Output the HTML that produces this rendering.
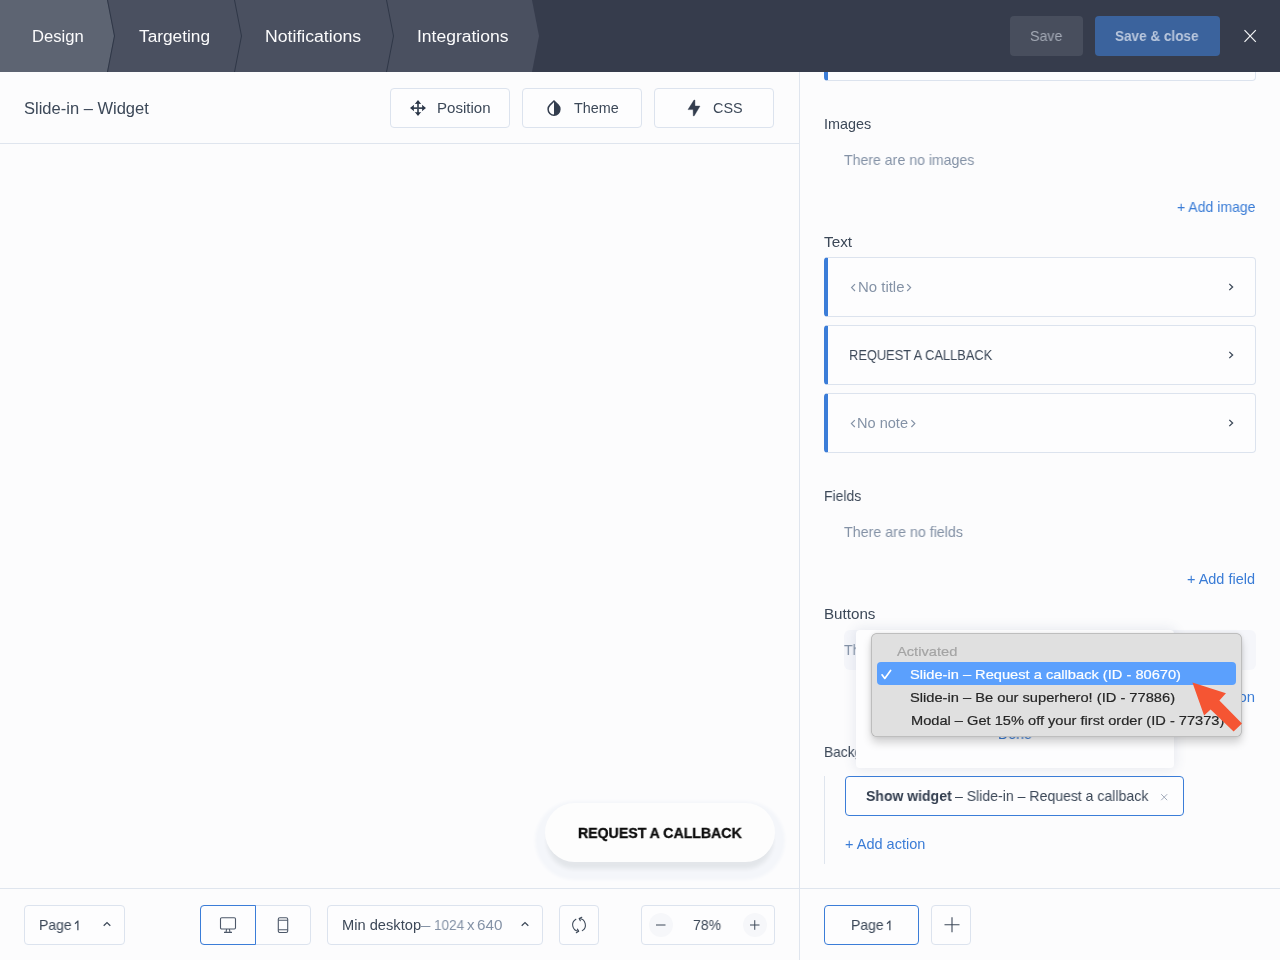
<!DOCTYPE html>
<html>
<head>
<meta charset="utf-8">
<style>
*{box-sizing:border-box;margin:0;padding:0}
html,body{width:1280px;height:960px;overflow:hidden}
body{font-family:"Liberation Sans",sans-serif;background:#fcfcfd;color:#3c4858;position:relative}
.abs{position:absolute}
.t{position:absolute;white-space:nowrap;line-height:1;transform-origin:0 0;will-change:transform}
#topbar{z-index:10;left:0;top:0;width:1280px;height:72px;background:#363c4c}
#topbar svg{position:absolute}
.btn{position:absolute;border:1px solid #dce3ee;border-radius:4px;background:#fdfdfe}
.card{position:absolute;left:824px;width:432px;height:60px;border:1px solid #dce3ee;border-left:4px solid #3b7dd8;border-radius:4px;background:#fdfdfe}
</style>
</head>
<body>
<!-- TOP BAR -->
<div id="topbar" class="abs">
<svg style="left:0;top:0" width="560" height="72" viewBox="0 0 560 72">
<polygon points="386,0 532,0 539,36 532,72 386,72" fill="#4a5060"/>
<polygon points="234,0 386,0 393,36 386,72 234,72" fill="#4a5060"/>
<polyline points="386.5,0 393.5,36 386.5,72" fill="none" stroke="#2f3747" stroke-width="1"/>
<polygon points="107,0 234,0 241,36 234,72 107,72" fill="#4a5060"/>
<polyline points="234.5,0 241.5,36 234.5,72" fill="none" stroke="#2f3747" stroke-width="1"/>
<polygon points="0,0 107,0 114,36 107,72 0,72" fill="#5d6472"/>
<polyline points="107.5,0 114.5,36 107.5,72" fill="none" stroke="#2f3747" stroke-width="1"/>
</svg>
<div class="abs" style="left:1010px;top:16px;width:73px;height:40px;border-radius:4px;background:#484e5d"></div>
<div class="abs" style="left:1095px;top:16px;width:125px;height:40px;border-radius:4px;background:#3b639d"></div>
<svg style="left:1243px;top:28.5px" width="14" height="14" viewBox="0 0 14 14"><path d="M1.5 1.2L12.8 12.8M12.8 1.2L1.5 12.8" stroke="#f4f5f7" stroke-width="1.2" fill="none"/></svg>
<div class="t" id="tb1" style="left:31.79px;top:29px;font-size:16px;color:#fbfbfc;transform:scaleX(1.0382)">Design</div>
<div class="t" id="tb2" style="left:139.16px;top:29px;font-size:16px;color:#fbfbfc;transform:scaleX(1.0787)">Targeting</div>
<div class="t" id="tb3" style="left:265.41px;top:29px;font-size:16px;color:#fbfbfc;transform:scaleX(1.1035)">Notifications</div>
<div class="t" id="tb4" style="left:416.53px;top:29px;font-size:16px;color:#fbfbfc;transform:scaleX(1.0943)">Integrations</div>
<div class="t" id="sv" style="left:1029.78px;top:29px;font-size:14.6px;color:#a3a9b5;transform:scaleX(0.9720)">Save</div>
<div class="t" id="svc" style="left:1115.40px;top:29px;font-size:14.6px;color:#b9c7dd;font-weight:bold;transform:scaleX(0.9271)">Save &amp; close</div>
</div>

<!-- SUB HEADER -->
<div class="abs" style="left:0;top:143px;width:800px;height:1px;background:#dfe5ee"></div>
<div class="abs" style="left:799px;top:72px;width:1px;height:888px;background:#dfe5ee"></div>
<div class="btn" style="left:390px;top:88px;width:120px;height:40px"></div>
<div class="btn" style="left:522px;top:88px;width:120px;height:40px"></div>
<div class="btn" style="left:654px;top:88px;width:120px;height:40px"></div>
<svg class="abs" id="ic1" style="left:410px;top:99.75px" width="16" height="16" viewBox="0 0 16 16"><path d="M8 2.5V13.5M2.5 8H13.5" stroke="#3c4858" stroke-width="1.75" fill="none"/><path d="M8 0L11.2 4.1Q8 3.2 4.8 4.1ZM8 16L11.2 11.9Q8 12.8 4.8 11.9ZM0 8L4.1 4.8Q3.2 8 4.1 11.2ZM16 8L11.9 4.8Q12.8 8 11.9 11.2Z" fill="#2a3547"/></svg>
<svg class="abs" id="ic2" style="left:546px;top:99px" width="16" height="18" viewBox="0 0 16 18"><path d="M8 1.96L12.17 6.13A5.9 5.9 0 0 1 8 16.2Z" fill="#333d4e"/><path d="M8 1.96L3.83 6.13A5.9 5.9 0 1 0 12.17 6.13Z" fill="none" stroke="#333d4e" stroke-width="1.5"/></svg>
<svg class="abs" id="ic3" style="left:686px;top:98px" width="16" height="20" viewBox="0 0 16 20"><path d="M8.9 2L9 8L14 8.1L8.25 17.75L7.25 17.9L7.1 11.6L2 11.6L8 2.1Z" fill="#333d4e" stroke="#333d4e" stroke-width="0.4" stroke-linejoin="round"/></svg>

<!-- RIGHT PANEL -->
<div class="card" style="top:21px"></div>
<div class="card" style="top:257px"></div>
<div class="card" style="top:325px"></div>
<div class="card" style="top:393px"></div>
<svg class="abs" style="left:1227px;top:282px" width="8" height="10" viewBox="0 0 8 10"><path d="M2.3 1.9L5.6 5L2.3 8.1" stroke="#3c4858" stroke-width="1.3" fill="none"/></svg>
<svg class="abs" style="left:1227px;top:350px" width="8" height="10" viewBox="0 0 8 10"><path d="M2.3 1.9L5.6 5L2.3 8.1" stroke="#3c4858" stroke-width="1.3" fill="none"/></svg>
<svg class="abs" style="left:1227px;top:418px" width="8" height="10" viewBox="0 0 8 10"><path d="M2.3 1.9L5.6 5L2.3 8.1" stroke="#3c4858" stroke-width="1.3" fill="none"/></svg>
<svg class="abs" style="left:850px;top:283px" width="64" height="10" viewBox="0 0 64 10"><path d="M5 1.2L1.6 4.6L5 8M57.2 1.2L60.6 4.6L57.2 8" stroke="#8492a6" stroke-width="1.2" fill="none"/></svg>
<svg class="abs" style="left:850px;top:419px" width="68" height="10" viewBox="0 0 68 10"><path d="M4.8 1.2L1.4 4.6L4.8 8M61.4 1.2L64.8 4.6L61.4 8" stroke="#8492a6" stroke-width="1.2" fill="none"/></svg>
<div class="abs" style="left:844px;top:630px;width:412px;height:40px;border-radius:6px;background:#f5f6fa"></div>
<div class="abs" style="left:824px;top:776px;width:1px;height:88px;background:#dfe5ee"></div>
<div class="abs" style="left:845px;top:776px;width:339px;height:40px;border:1px solid #3b7dd8;border-radius:4px;background:#fdfdfe"></div>
<svg class="abs" style="left:1160px;top:793px" width="8" height="8" viewBox="0 0 8 8"><path d="M1.2 1.2L7.2 7.2M7.2 1.2L1.2 7.2" stroke="#98a2b2" stroke-width="0.9" fill="none"/></svg>

<!-- BOTTOM BAR -->
<div class="abs" style="left:0;top:888px;width:1280px;height:1px;background:#dfe5ee"></div>

<!-- WIDGET PILL -->
<div class="abs" style="left:545px;top:803px;width:230px;height:59px;border-radius:30px;background:#fdfdfd;box-shadow:0 9px 4px -2px rgba(20,22,30,0.07),0 8px 3px 10px rgba(244,246,250,1)"></div>

<!-- BOTTOM CONTROLS -->
<div class="btn" style="left:24px;top:905px;width:101px;height:40px"></div>
<svg class="abs" style="left:102px;top:920.2px" width="10" height="8" viewBox="0 0 10 8"><path d="M1.7 5.7L5 2.5L8.3 5.7" stroke="#3c4858" stroke-width="1.25" fill="none"/></svg>

<div class="btn" style="left:200px;top:905px;width:111px;height:40px"></div>
<div class="abs" style="left:200px;top:905px;width:56px;height:40px;border:1px solid #3b7dd8;border-radius:4px 0 0 4px"></div>
<svg class="abs" style="left:219px;top:916px" width="18" height="18" viewBox="0 0 18 18" fill="none" stroke="#4d5869" stroke-width="1.1"><rect x="1.5" y="1.7" width="15" height="11.3" rx="1.2"/><path d="M7.6 13L7 16.3M10.4 13L11 16.3M5 16.4H13"/></svg>
<svg class="abs" style="left:276px;top:916px" width="14" height="18" viewBox="0 0 14 18" fill="none" stroke="#4d5869" stroke-width="1.1"><rect x="2.3" y="1.7" width="9.4" height="14.8" rx="1.5"/><path d="M2.3 4.2H11.7M2.3 13.8H11.7"/></svg>

<div class="btn" style="left:327px;top:905px;width:216px;height:40px"></div>
<svg class="abs" style="left:520px;top:920.2px" width="10" height="8" viewBox="0 0 10 8"><path d="M1.7 5.7L5 2.5L8.3 5.7" stroke="#3c4858" stroke-width="1.25" fill="none"/></svg>

<div class="btn" style="left:559px;top:905px;width:40px;height:40px"></div>
<svg class="abs" style="left:570px;top:916px" width="18" height="18" viewBox="0 0 18 18" fill="none" stroke="#3c4858" stroke-width="1.05" stroke-linecap="round"><path d="M5.9 3.2A6.5 6.5 0 0 0 8.5 15.3M12.3 14.6A6.5 6.5 0 0 0 9.4 2.6"/><path d="M7.4 13.1L8.7 15.3L6.3 16.7M11.8 1.3L9.2 2.6L10.3 4.8" stroke-width="1.1" stroke-linejoin="round"/></svg>

<div class="btn" style="left:641px;top:905px;width:134px;height:40px"></div>
<div class="abs" style="left:649px;top:913px;width:24px;height:24px;border-radius:12px;background:#f6f7fa"></div>
<div class="abs" style="left:743px;top:913px;width:24px;height:24px;border-radius:12px;background:#f6f7fa"></div>
<svg class="abs" style="left:655px;top:919px" width="12" height="12" viewBox="0 0 12 12"><path d="M1 6H10.5" stroke="#3c4858" stroke-width="1"/></svg>
<svg class="abs" style="left:749px;top:919px" width="12" height="12" viewBox="0 0 12 12"><path d="M1 6H10.5M5.75 1.2V10.8" stroke="#3c4858" stroke-width="1"/></svg>

<div class="btn" style="left:824px;top:905px;width:95px;height:40px;border-color:#3b7dd8"></div>
<div class="btn" style="left:931px;top:905px;width:40px;height:40px"></div>
<svg class="abs" style="left:942.5px;top:916px" width="18" height="18" viewBox="0 0 18 18"><path d="M1.5 8.8H16.5M9 1.3V16.3" stroke="#3c4858" stroke-width="1.1"/></svg>
<svg class="abs" style="left:73.5px;top:919.5px" width="6" height="11" viewBox="0 0 6 11"><path d="M0.6 3.2L3.6 0.5H4.5V10.3H3.25V2.4L1.3 4.2Z" fill="#3c4858"/></svg>
<svg class="abs" style="left:885.5px;top:919.5px" width="6" height="11" viewBox="0 0 6 11"><path d="M0.6 3.2L3.6 0.5H4.5V10.3H3.25V2.4L1.3 4.2Z" fill="#3c4858"/></svg>
<div class="t" id="ttl" style="left:24.14px;top:101px;font-size:16px;color:#3c4858;transform:scaleX(1.0320)">Slide-in – Widget</div>
<div class="t" id="bp" style="left:437.39px;top:101px;font-size:14.4px;color:#3c4858;transform:scaleX(1.0463)">Position</div>
<div class="t" id="bt" style="left:573.71px;top:101px;font-size:14.4px;color:#3c4858;transform:scaleX(0.9987)">Theme</div>
<div class="t" id="bc" style="left:712.87px;top:101px;font-size:14.4px;color:#3c4858;transform:scaleX(0.9961)">CSS</div>
<div class="t" id="r1" style="left:823.71px;top:117px;font-size:14.4px;color:#3c4858;transform:scaleX(0.9936)">Images</div>
<div class="t" id="r2" style="left:844.11px;top:153px;font-size:14.4px;color:#8492a6;transform:scaleX(0.9818)">There are no images</div>
<div class="t" id="r3" style="left:1176.55px;top:200px;font-size:14.4px;color:#3a7cd6;transform:scaleX(0.9748)">+ Add image</div>
<div class="t" id="r4" style="left:823.69px;top:235px;font-size:14.4px;color:#3c4858;transform:scaleX(1.0655)">Text</div>
<div class="t" id="c1" style="left:857.50px;top:280px;font-size:14.4px;color:#8492a6;transform:scaleX(1.0373)">No title</div>
<div class="t" id="c2" style="left:848.97px;top:348px;font-size:14.4px;color:#3c4858;transform:scaleX(0.8920)">REQUEST A CALLBACK</div>
<div class="t" id="c3" style="left:857.43px;top:416px;font-size:14.4px;color:#8492a6;transform:scaleX(1.0121)">No note</div>
<div class="t" id="r5" style="left:824.18px;top:489px;font-size:14.4px;color:#3c4858;transform:scaleX(0.9682)">Fields</div>
<div class="t" id="r6" style="left:844.11px;top:525px;font-size:14.4px;color:#8492a6;transform:scaleX(0.9920)">There are no fields</div>
<div class="t" id="r7" style="left:1187.43px;top:572px;font-size:14.4px;color:#3a7cd6;transform:scaleX(1.0056)">+ Add field</div>
<div class="t" id="r8" style="left:824.08px;top:607px;font-size:14.4px;color:#3c4858;transform:scaleX(1.0544)">Buttons</div>
<div class="t" id="r9" style="left:844.12px;top:643px;font-size:14.4px;color:#8492a6;transform:scaleX(0.9744)">There are no buttons</div>
<div class="t" id="r10" style="left:1171.31px;top:690px;font-size:14.4px;color:#3a7cd6;transform:scaleX(1.0338)">+ Add button</div>
<div class="t" id="r11" style="left:824.19px;top:745px;font-size:14.4px;color:#3c4858;transform:scaleX(0.9578)">Background actions</div>
<div class="t" id="r12a" style="left:865.62px;top:789px;font-size:14.4px;color:#333e4f;font-weight:bold;transform:scaleX(0.9738)">Show widget</div>
<div class="t" id="r12b" style="left:954.91px;top:789px;font-size:14.4px;color:#3c4858;transform:scaleX(0.9781)">– Slide-in – Request a callback</div>
<div class="t" id="r13" style="left:845.32px;top:837px;font-size:14.4px;color:#3a7cd6;transform:scaleX(1.0095)">+ Add action</div>
<div class="t" id="pill" style="left:577.76px;top:826px;font-size:14.6px;color:#0d0d0d;-webkit-text-stroke:0.35px #0d0d0d;font-weight:bold;transform:scaleX(0.9676)">REQUEST A CALLBACK</div>
<div class="t" id="b1" style="left:38.87px;top:918px;font-size:14.4px;color:#3c4858;transform:scaleX(0.9746)">Page</div>
<div class="t" id="b2a" style="left:341.72px;top:918px;font-size:14.4px;color:#3c4858;transform:scaleX(1.0189)">Min desktop</div>
<div class="t" id="b2b" style="left:421.32px;top:918px;font-size:14.4px;color:#8492a6;transform:scaleX(0.6381)">—</div>
<div class="t" id="b2c" style="left:433.99px;top:918px;font-size:14.4px;color:#8492a6;transform:scaleX(0.9423)">1024</div>
<div class="t" id="b2d" style="left:466.83px;top:918px;font-size:14.4px;color:#8492a6;transform:scaleX(1.0516)">x</div>
<div class="t" id="b2e" style="left:477.25px;top:918px;font-size:14.4px;color:#8492a6;transform:scaleX(1.0581)">640</div>
<div class="t" id="b3" style="left:693.42px;top:918px;font-size:14.4px;color:#3c4858;transform:scaleX(0.9743)">78%</div>
<div class="t" id="b4" style="left:850.87px;top:918px;font-size:14.4px;color:#3c4858;transform:scaleX(0.9746)">Page</div>

<!-- POPOVER -->
<div class="abs" style="left:856px;top:630px;width:318px;height:138px;background:#fdfdfe;border-radius:4px;box-shadow:0 0 12px 2px rgba(60,80,130,0.10)"></div>
<div class="t" id="dn" style="left:997.97px;top:727px;font-size:14.4px;color:#3a7cd6;transform:scaleX(0.9799)">Done</div>

<!-- NATIVE DROPDOWN -->
<div class="abs" style="left:871px;top:633px;width:371px;height:103.5px;background:#e0e0e0;border-radius:6px;box-shadow:inset 0 0 0 0.8px rgba(0,0,0,0.2),0 0 4px rgba(0,0,0,0.10),0 6px 9px rgba(0,0,0,0.17)"></div>
<div class="abs" style="left:877px;top:662px;width:359px;height:23px;background:#5ba0fd;border-radius:4px"></div>
<svg class="abs" style="left:880px;top:668px" width="13" height="12" viewBox="0 0 13 12"><path d="M2 6.8L4.8 10.4L10.6 2.4" stroke="#fff" stroke-width="1.7" fill="none" stroke-linecap="round" stroke-linejoin="round"/></svg>
<div class="t" id="d0" style="left:896.65px;top:645px;font-size:13.4px;color:#a4a4a4;-webkit-text-stroke:0.2px #a4a4a4;transform:scaleX(1.0945)">Activated</div>
<div class="t" id="d1" style="left:910.49px;top:668px;font-size:13.4px;color:#ffffff;-webkit-text-stroke:0.2px #ffffff;transform:scaleX(1.0933)">Slide-in – Request a callback (ID - 80670)</div>
<div class="t" id="d2" style="left:910.49px;top:691px;font-size:13.4px;color:#262626;-webkit-text-stroke:0.2px #262626;transform:scaleX(1.0956)">Slide-in – Be our superhero! (ID - 77886)</div>
<div class="t" id="d3" style="left:910.83px;top:714px;font-size:13.4px;color:#262626;-webkit-text-stroke:0.2px #262626;transform:scaleX(1.0916)">Modal – Get 15% off your first order (ID - 77373)</div>
<!-- ARROW -->
<svg class="abs" style="left:1180px;top:670px" width="80" height="70" viewBox="0 0 80 70"><polygon points="12.4,12.4 45.95,23.3 39.4,30.6 62,53.6 53.6,61.6 30.6,39.4 24.1,45.6" fill="#f55533"/></svg>

</body>
</html>
